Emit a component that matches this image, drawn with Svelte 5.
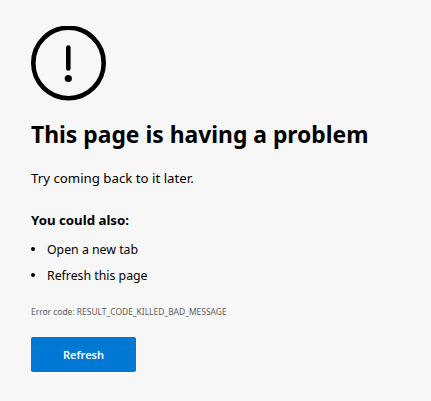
<script>
  const suggestions = ['Open a new tab', 'Refresh this page'];
</script>

<main class="error-page">
  <svg class="icon" width="76" height="76" viewBox="0 0 76 76" aria-hidden="true">
    <circle cx="37.5" cy="37" r="35.2" fill="none" stroke="#000" stroke-width="4.6" />
    <line x1="37.3" y1="21.5" x2="37.3" y2="42.5" stroke="#000" stroke-width="4.6" stroke-linecap="round" />
    <circle cx="37.3" cy="52.5" r="3.6" fill="#000" />
  </svg>

  <h1>This page is having a problem</h1>
  <p class="lead">Try coming back to it later.</p>

  <h2>You could also:</h2>
  <ul>
    {#each suggestions as item}
      <li>{item}</li>
    {/each}
  </ul>

  <p class="code">Error code: RESULT_CODE_KILLED_BAD_MESSAGE</p>

  <button>Refresh</button>
</main>

<style>
  :global(body) {
    background: #f7f7f7;
  }
  .error-page {
    box-sizing: border-box;
    height: 401px;
    padding: 26px 0 0 31px;
    font-family: "Noto Sans", "Open Sans", sans-serif;
    color: #000;
    overflow: hidden;
  }
  .icon {
    display: block;
  }
  h1 {
    margin: 17px 0 0;
    font-size: 22.85px;
    line-height: 32px;
    font-weight: 700;
  }
  .lead {
    margin: 17px 0 0;
    font-size: 13.25px;
    line-height: 20px;
  }
  h2 {
    margin: 22px 0 0;
    font-size: 13.25px;
    line-height: 20px;
    font-weight: 700;
  }
  ul {
    margin: 10px 0 0;
    padding: 0;
    list-style: none;
  }
  li {
    display: flex;
    align-items: center;
    gap: 12px;
    font-size: 12.3px;
    line-height: 20px;
    margin-bottom: 6px;
  }
  li::before {
    content: "";
    width: 4px;
    height: 4px;
    margin-top: -2px;
    border-radius: 50%;
    background: #000;
  }
  .code {
    margin: 20px 0 0;
    font-size: 8.45px;
    line-height: 12px;
    color: #5d5d5d;
  }
  button {
    display: block;
    margin-top: 19px;
    width: 105px;
    height: 35px;
    padding: 0;
    border: none;
    border-radius: 2px;
    background: #0078d4;
    color: #fff;
    font-family: inherit;
    font-size: 11px;
    font-weight: 600;
  }
</style>
